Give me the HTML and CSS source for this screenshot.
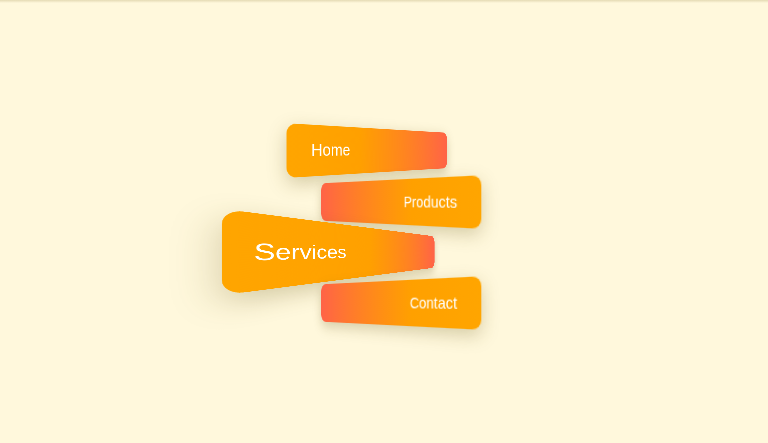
FILE: index.html
```html
<!DOCTYPE html>
<html lang="en">
<head>
<meta charset="utf-8">
<title>Menu</title>
<link rel="stylesheet" href="styles.css">
</head>
<body>
<div class="topline"></div>
<ul class="menu">
  <li class="item home"><a href="#">Home</a></li>
  <li class="item products"><a href="#">Products</a></li>
  <li class="item services"><a href="#">Services</a></li>
  <li class="item contact"><a href="#">Contact</a></li>
</ul>
</body>
</html>
```
FILE: styles.css
```css
html, body {
  margin: 0;
  padding: 0;
  height: 100%;
}
body {
  background: #fff8dc;
  font-family: "Liberation Sans", Arial, sans-serif;
  overflow: hidden;
}
.topline {
  height: 3px;
  background: linear-gradient(to bottom, rgba(150, 130, 60, 0.25), rgba(150, 130, 60, 0));
}
.menu {
  list-style: none;
  margin: 0;
  padding: 126px 0 0 0;
  display: flex;
  flex-direction: column;
}
.item {
  width: 200px;
  box-sizing: border-box;
  border-radius: 8px;
  display: flex;
  align-items: center;
  box-shadow: 0 5px 15px rgba(100, 85, 20, 0.27);
}
.item a {
  color: #fff;
  text-decoration: none;
  font-size: 14.5px;
}
.home {
  height: 42.5px;
  margin-left: 284px;
  padding-left: 21px;
  background: linear-gradient(to right, #ffa500 0%, #ffa000 35%, #ff6347 100%);
  transform: perspective(300px) rotateY(40deg);
}
.products {
  height: 43.6px;
  margin-left: 287px;
  margin-top: 8px;
  padding-right: 22px;
  justify-content: flex-end;
  background: linear-gradient(to right, #ff6347 0%, #ffa000 65%, #ffa500 100%);
  transform: perspective(355px) rotateY(-39.2deg);
}
.services {
  height: 46px;
  margin-left: 277.6px;
  margin-top: 6px;
  padding-left: 12px;
  background: linear-gradient(to right, #ffa500 0%, #ffa000 45%, #ff6347 100%);
  transform: perspective(119px) rotateY(33.9deg);
}
.contact {
  height: 43.6px;
  margin-left: 287px;
  margin-top: 5.5px;
  padding-right: 22px;
  justify-content: flex-end;
  background: linear-gradient(to right, #ff6347 0%, #ffa000 65%, #ffa500 100%);
  transform: perspective(355px) rotateY(-39.2deg);
}
```
